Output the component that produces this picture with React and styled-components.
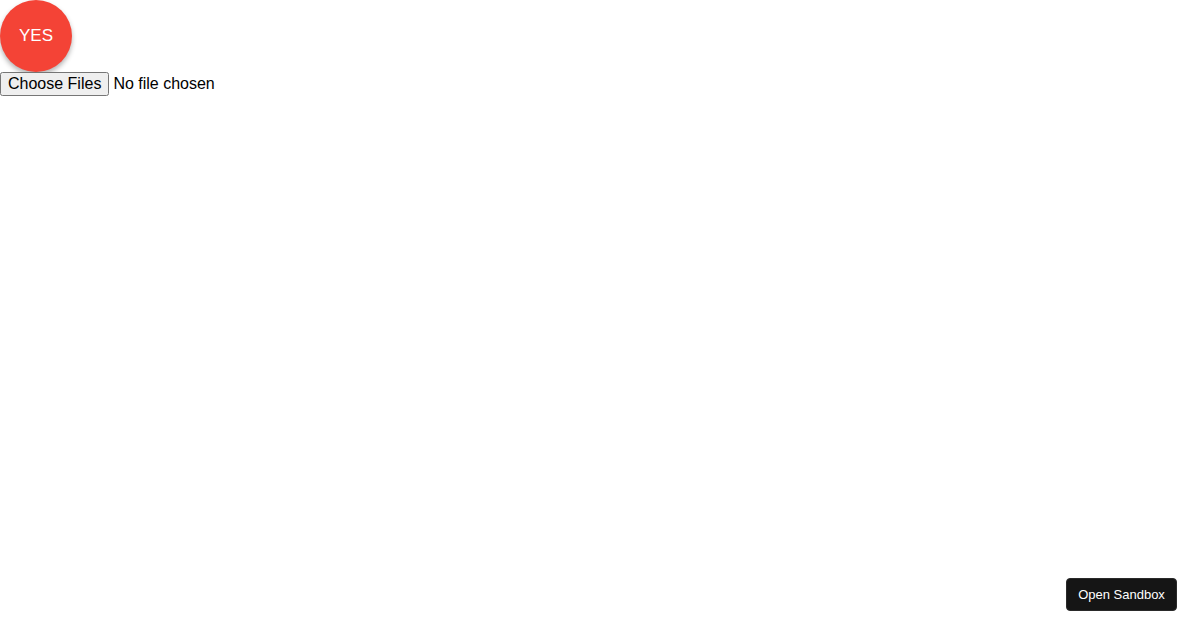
import React from 'react';
import styled, { createGlobalStyle } from 'styled-components';

const GlobalStyle = createGlobalStyle`
  html, body {
    margin: 0;
    padding: 0;
    background: #fff;
    font-family: 'Liberation Sans', Arial, sans-serif;
  }
`;

const Page = styled.div`
  display: flex;
  flex-direction: column;
  align-items: flex-start;
`;

const Fab = styled.button`
  width: 72px;
  height: 72px;
  border-radius: 50%;
  border: none;
  padding: 0;
  background: #f44336;
  color: #fff;
  font-family: 'Liberation Sans', Arial, sans-serif;
  font-size: 17px;
  box-shadow: 0 3px 5px rgba(0, 0, 0, 0.3);
  cursor: pointer;
`;

const FileInput = styled.input`
  font-family: 'Liberation Sans', Arial, sans-serif;
  font-size: 16px;
  color: #000;
  margin: 0;
`;

const SandboxButton = styled.a`
  position: fixed;
  right: 23px;
  bottom: 19px;
  display: flex;
  align-items: center;
  justify-content: center;
  width: 111px;
  height: 33px;
  box-sizing: border-box;
  border-radius: 4px;
  background: #151515;
  border: 1px solid #2a2a2a;
  color: #fff;
  font-family: 'Liberation Sans', Arial, sans-serif;
  font-size: 13px;
  text-decoration: none;
`;

export default function App() {
  return (
    <>
      <GlobalStyle />
      <Page>
        <Fab>YES</Fab>
        <FileInput type="file" multiple />
      </Page>
      <SandboxButton href="#">Open Sandbox</SandboxButton>
    </>
  );
}
